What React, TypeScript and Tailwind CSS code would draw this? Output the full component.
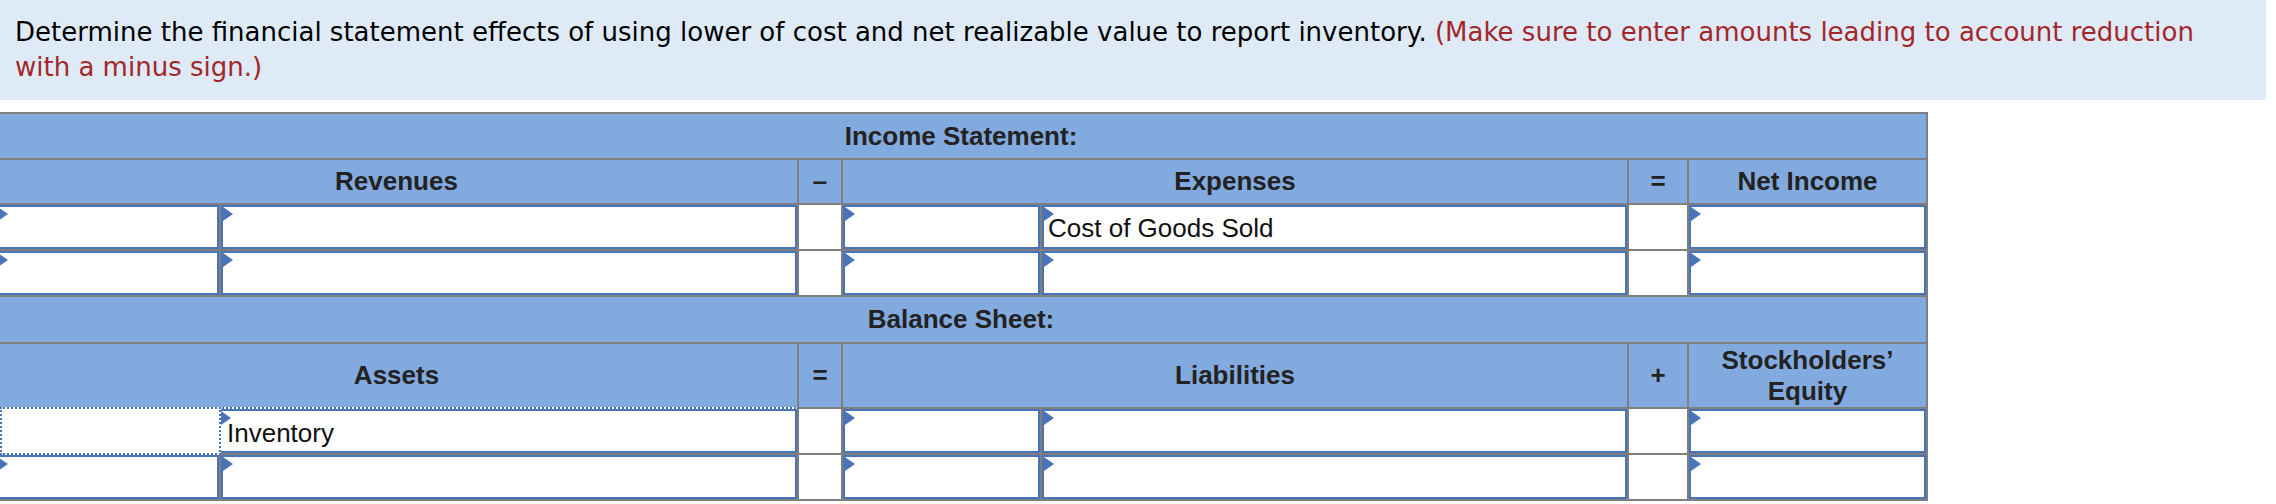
import React from "react";

const BLUE = "border-[#4a74b8]";

function Arrow() {
  return (
    <svg
      className="absolute left-0 top-0"
      width="11"
      height="14"
      viewBox="0 0 11 14"
    >
      <polygon points="0,0 10,7 0,14" fill="#4a74b8" />
    </svg>
  );
}

function Input({ text, topPad = "pt-[2px]" }: { text?: string; topPad?: string }) {
  return (
    <div className={`relative bg-white border-2 ${BLUE} flex items-center pl-[4px] ${topPad} text-[26px] leading-[30px] text-[#111]`}>
      <Arrow />
      {text ? <span className="relative">{text}</span> : null}
    </div>
  );
}

function Blank() {
  return <div className="bg-white" />;
}

function Head({ children, span = "" }: { children: React.ReactNode; span?: string }) {
  return (
    <div className={`${span} bg-[#82aadf] flex items-center justify-center text-center font-bold text-[26px] leading-[31px] text-[#222]`}>
      {children}
    </div>
  );
}

function DataRow({ cogs }: { cogs?: string }) {
  return (
    <>
      <Input />
      <Input />
      <Blank />
      <Input />
      <Input text={cogs} />
      <Blank />
      <Input />
    </>
  );
}

export default function App() {
  return (
    <div className="bg-white w-[2276px] h-[504px] overflow-hidden" style={{ fontFamily: '"Liberation Sans", Arial, sans-serif' }}>
      <div
        className="w-[2266px] h-[100px] bg-[#deebf7] pl-[15px] pt-[15px] text-[26px] leading-[35px] text-black whitespace-nowrap"
        style={{ fontFamily: '"DejaVu Sans", Verdana, sans-serif' }}
      >
        Determine the financial statement effects of using lower of cost and net realizable value to report inventory.{" "}
        <span className="text-[#a3262a]">
          (Make sure to enter amounts leading to account reduction
          <br />
          with a minus sign.)
        </span>
      </div>

      <div className="mt-[12px] ml-[-6px] inline-grid grid-cols-[223px_576px_42px_197px_585px_58px_237px] grid-rows-[44px_43px_44px_44px_45px_63px_44px_44px] gap-[2px] p-[2px] bg-[#7f7f7f]">
        <Head span="col-span-7">Income Statement:</Head>

        <Head span="col-span-2">Revenues</Head>
        <Head>–</Head>
        <Head span="col-span-2">Expenses</Head>
        <Head>=</Head>
        <Head>Net Income</Head>

        <DataRow cogs="Cost of Goods Sold" />
        <DataRow />

        <Head span="col-span-7">Balance Sheet:</Head>

        <Head span="col-span-2">Assets</Head>
        <Head>=</Head>
        <Head span="col-span-2">Liabilities</Head>
        <Head>+</Head>
        <Head>
          <span>
            Stockholders’
            <br />
            Equity
          </span>
        </Head>

        {/* focused row */}
        <div className="relative bg-white">
          <div className="absolute top-[-2px] bottom-[-2px] left-[4px] right-[-2px] bg-white border-2 border-dotted border-[#4a74b8]" />
        </div>
        <div className="relative">
          <div className="absolute top-[-2px] left-[-2px] right-[-2px] h-[2px] bg-white border-t-2 border-dotted border-[#4a74b8]" />
          <div className="h-full relative bg-white border-2 border-l-0 border-[#4a74b8] flex items-center pl-[6px] pt-[3px] text-[26px] leading-[30px] text-[#111]">
            <Arrow />
            <span className="relative">Inventory</span>
          </div>
        </div>
        <Blank />
        <Input />
        <Input />
        <Blank />
        <Input />

        <DataRow />
      </div>
    </div>
  );
}
